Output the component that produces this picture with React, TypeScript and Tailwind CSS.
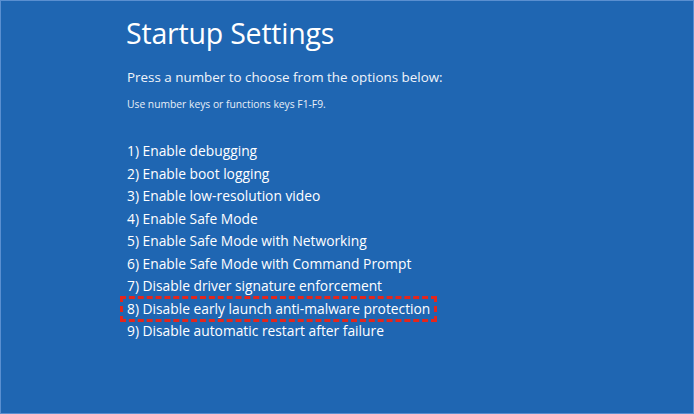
import React from 'react';

const options = [
  '1) Enable debugging',
  '2) Enable boot logging',
  '3) Enable low-resolution video',
  '4) Enable Safe Mode',
  '5) Enable Safe Mode with Networking',
  '6) Enable Safe Mode with Command Prompt',
  '7) Disable driver signature enforcement',
  '8) Disable early launch anti-malware protection',
  '9) Disable automatic restart after failure',
];

export default function App() {
  return (
    <div className="w-[694px] h-[414px] bg-[#1f66b2] border border-[#5a8fd0] text-white font-['Open_Sans',sans-serif] overflow-hidden">
      <div className="pl-[125px] pt-[12px]">
        <h1 className="text-[28.5px] leading-[40px] font-normal tracking-[-0.2px]">Startup Settings</h1>
        <p className="mt-[14px] ml-[1px] text-[13.4px] leading-[20px] text-[#f0f4fa]">Press a number to choose from the options below:</p>
        <p className="mt-[10px] ml-[1px] text-[10.3px] leading-[14px] text-[#e8eef7]">Use number keys or functions keys F1-F9.</p>
        <ul className="mt-[29px] ml-[1px] flex flex-col">
          {options.map((o, i) => (
            <li key={o} className="h-[22.5px] flex items-center">
              <span
                className={
                  i === 7
                    ? 'text-[13.8px] leading-[20px] -ml-[7px] pl-[4px] pr-[4px] border-[3px] border-dashed border-[#e4261c]'
                    : 'text-[13.8px] leading-[22px]'
                }
              >
                {o}
              </span>
            </li>
          ))}
        </ul>
      </div>
    </div>
  );
}
